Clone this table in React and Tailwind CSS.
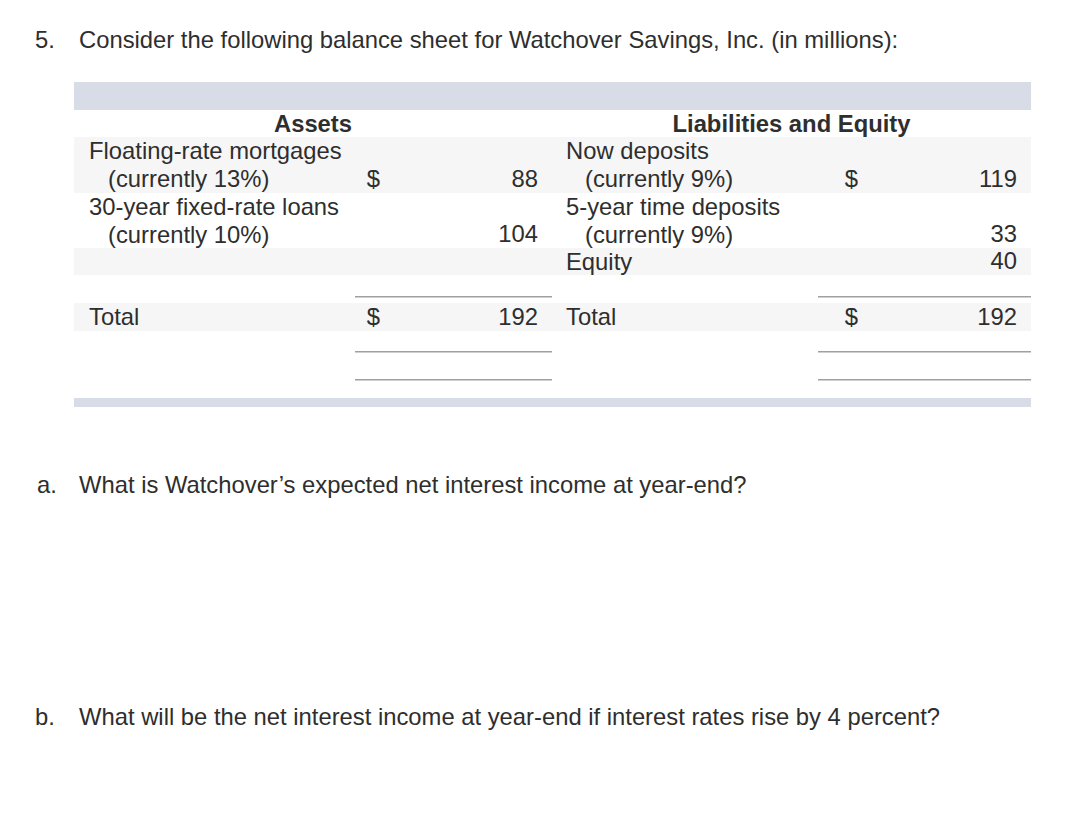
const font = { fontFamily: '"Liberation Sans", Arial, sans-serif' };

const W = ['w-[281px]', 'w-[25px]', 'w-[172px]', 'w-[266px]', 'w-[40px]', 'w-[173px]'];

function Line() {
  return <div className="h-[2px] border-t border-[#a0a0a0] bg-[#cfcfcf]" />;
}

function Row({ gray, h, cells }) {
  return (
    <div className={`flex ${h} ${gray ? 'bg-[#f6f6f6]' : 'bg-white'}`}>
      {cells.map((c, i) => (
        <div key={i} className={`${W[i]} flex flex-col justify-end`}>
          {c}
        </div>
      ))}
    </div>
  );
}

function Label({ first, second, right }) {
  return (
    <div className={`flex flex-col justify-start h-full ${right ? 'pl-[14px]' : 'pl-[15px]'}`}>
      {first && <span>{first}</span>}
      {second && <span className="pl-[19px]">{second}</span>}
    </div>
  );
}

function Num({ v }) {
  return <div className="text-right pr-[14px]">{v}</div>;
}

function Dollar({ v }) {
  return <div className="text-right">{v}</div>;
}

function RuleCell() {
  return <div className="h-full pt-[20px]"><Line /></div>;
}

export default function App() {
  return (
    <div className="min-h-screen bg-white text-[#2e2e2e] text-[23.8px] leading-[28px] pt-[26px] pl-[35px]" style={font}>
      <div className="flex">
        <span className="w-[44px]">5.</span>
        <span>Consider the following balance sheet for Watchover Savings, Inc. (in millions):</span>
      </div>

      <div className="ml-[39px] mt-[28px] w-[957px]">
        <div className="h-[28px] bg-[#d8dce6]" />
        <div className="flex h-[27px] font-bold leading-[27px]">
          <div className="w-[478px] text-center">Assets</div>
          <div className="w-[479px] text-center">Liabilities and Equity</div>
        </div>
        <Row
          gray
          h="h-[56px]"
          cells={[
            <Label first="Floating-rate mortgages" second="(currently 13%)" />,
            <Dollar v="$" />,
            <Num v="88" />,
            <Label right first="Now deposits" second="(currently 9%)" />,
            <Dollar v="$" />,
            <Num v="119" />,
          ]}
        />
        <Row
          h="h-[55px]"
          cells={[
            <Label first="30-year fixed-rate loans" second="(currently 10%)" />,
            null,
            <Num v="104" />,
            <Label right first="5-year time deposits" second="(currently 9%)" />,
            null,
            <Num v="33" />,
          ]}
        />
        <Row
          gray
          h="h-[27px]"
          cells={[null, null, null, <Label right first="Equity" />, null, <Num v="40" />]}
        />
        <div className="flex h-[28px]">
          <div className="w-[281px]" />
          <div className="w-[197px] pt-[21px]"><Line /></div>
          <div className="w-[266px]" />
          <div className="w-[213px] pt-[21px]"><Line /></div>
        </div>
        <Row
          gray
          h="h-[28px]"
          cells={[
            <Label first="Total" />,
            <Dollar v="$" />,
            <Num v="192" />,
            <Label right first="Total" />,
            <Dollar v="$" />,
            <Num v="192" />,
          ]}
        />
        {[0, 1].map((k) => (
          <div key={k} className="flex h-[28px]">
            <div className="w-[281px]" />
            <div className="w-[197px]"><RuleCell /></div>
            <div className="w-[266px]" />
            <div className="w-[213px]"><RuleCell /></div>
          </div>
        ))}
        <div className="h-[11px]" />
        <div className="h-[9px] bg-[#d8dce6]" />
      </div>

      <div className="flex mt-[64px]">
        <span className="w-[44px] pl-[2px]">a.</span>
        <span>What is Watchover’s expected net interest income at year-end?</span>
      </div>

      <div className="flex mt-[204px]">
        <span className="w-[44px]">b.</span>
        <span>What will be the net interest income at year-end if interest rates rise by 4 percent?</span>
      </div>
    </div>
  );
}
